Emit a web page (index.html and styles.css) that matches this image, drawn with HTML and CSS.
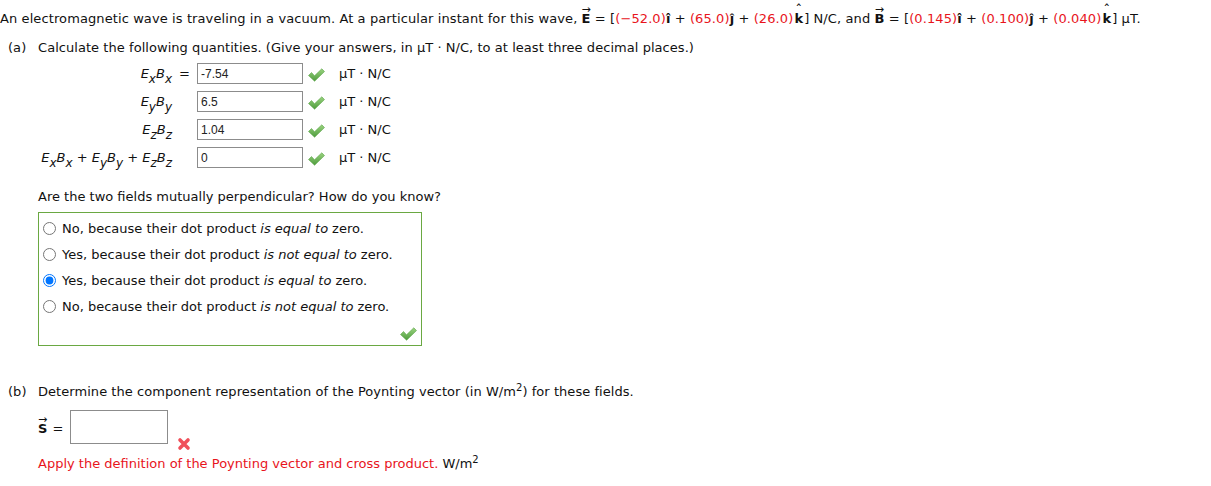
FILE: index.html
```html
<!DOCTYPE html>
<html lang="en">
<head>
    <meta charset="UTF-8">
    <meta name="viewport" content="width=device-width, initial-scale=1.0">
    <title>Poynting Vector</title>
    <link rel="stylesheet" href="styles.css">
</head>
<body>
    <p class="intro">
        An electromagnetic wave is traveling in a vacuum. At a particular instant for this wave,
        <span class="vec">E</span> = [<span class="val">(&minus;52.0)</span><b>&icirc;</b> + <span class="val">(65.0)</span><b>&jcirc;</b> + <span class="val">(26.0)</span><span class="hat">k</span>] N/C, and
        <span class="vec">B</span> = [<span class="val">(0.145)</span><b>&icirc;</b> + <span class="val">(0.100)</span><b>&jcirc;</b> + <span class="val">(0.040)</span><span class="hat">k</span>] &micro;T.
    </p>

    <div class="part">
        <div class="part-head">
            <span class="part-label">(a)</span>
            <span>Calculate the following quantities. (Give your answers, in &micro;T &middot; N/C, to at least three decimal places.)</span>
        </div>

        <div class="calc-grid">
            <div class="calc-label"><i>E<sub>x</sub>B<sub>x</sub></i></div>
            <div class="calc-eq">=</div>
            <input class="answer" type="text" value="-7.54">
            <svg class="check" viewBox="0 0 17 14"><use href="#tick"/></svg>
            <div class="unit">&micro;T &middot; N/C</div>

            <div class="calc-label"><i>E<sub>y</sub>B<sub>y</sub></i></div>
            <div class="calc-eq"></div>
            <input class="answer" type="text" value="6.5">
            <svg class="check" viewBox="0 0 17 14"><use href="#tick"/></svg>
            <div class="unit">&micro;T &middot; N/C</div>

            <div class="calc-label"><i>E<sub>z</sub>B<sub>z</sub></i></div>
            <div class="calc-eq"></div>
            <input class="answer" type="text" value="1.04">
            <svg class="check" viewBox="0 0 17 14"><use href="#tick"/></svg>
            <div class="unit">&micro;T &middot; N/C</div>

            <div class="calc-label"><i>E<sub>x</sub>B<sub>x</sub></i> + <i>E<sub>y</sub>B<sub>y</sub></i> + <i>E<sub>z</sub>B<sub>z</sub></i></div>
            <div class="calc-eq"></div>
            <input class="answer" type="text" value="0">
            <svg class="check" viewBox="0 0 17 14"><use href="#tick"/></svg>
            <div class="unit">&micro;T &middot; N/C</div>
        </div>

        <p class="question">Are the two fields mutually perpendicular? How do you know?</p>

        <div class="choice-box">
            <label class="choice"><input type="radio" name="perp"> No, because their dot product <i>is equal to</i> zero.</label>
            <label class="choice"><input type="radio" name="perp"> Yes, because their dot product <i>is not equal to</i> zero.</label>
            <label class="choice"><input type="radio" name="perp" checked> Yes, because their dot product <i>is equal to</i> zero.</label>
            <label class="choice"><input type="radio" name="perp"> No, because their dot product <i>is not equal to</i> zero.</label>
            <div class="box-check"><svg class="check" viewBox="0 0 17 14"><use href="#tick"/></svg></div>
        </div>
    </div>

    <div class="part part-b">
        <div class="part-head">
            <span class="part-label">(b)</span>
            <span>Determine the component representation of the Poynting vector (in W/m<sup>2</sup>) for these fields.</span>
        </div>
        <div class="s-row">
            <span class="vec">S</span>
            <span class="s-eq">=</span>
            <input class="s-input" type="text">
            <svg class="cross" viewBox="0 0 14 14">
                <path d="M3 3 L11 11 M11 3 L3 11" stroke="#f0505a" stroke-width="3.6" stroke-linecap="round"/>
            </svg>
        </div>
        <p class="hint">Apply the definition of the Poynting vector and cross product. <span class="hint-unit">W/m<sup>2</sup></span></p>
    </div>

    <svg width="0" height="0" class="defs">
        <defs>
            <linearGradient id="tickfill" x1="0" y1="0" x2="0" y2="1">
                <stop offset="0" stop-color="#9ad37f"/>
                <stop offset="1" stop-color="#4e9c3d"/>
            </linearGradient>
            <symbol id="tick" viewBox="0 0 17 14">
                <path d="M0.5 7.5 L3.5 4.5 L6.5 7.8 L13.8 0.8 L16.5 3.6 L6.6 13.2 Z" fill="url(#tickfill)" stroke="#5aa548" stroke-width="0.6"/>
            </symbol>
        </defs>
    </svg>
</body>
</html>
```

FILE: styles.css
```css
* {
    box-sizing: border-box;
}

body {
    margin: 0;
    font-family: "DejaVu Sans", Verdana, sans-serif;
    font-size: 13px;
    color: #111;
    background: #fff;
}

p {
    margin: 0;
}

.intro {
    margin-top: 10px;
    line-height: 18px;
    white-space: nowrap;
    letter-spacing: 0.1px;
}

.val {
    color: #e8141c;
}

.vec,
.hat {
    position: relative;
    display: inline-block;
    font-weight: bold;
}

.vec::before {
    content: "\2192";
    position: absolute;
    left: 50%;
    top: -9px;
    transform: translateX(-50%);
    font-weight: normal;
    font-size: 11px;
}

.hat {
    padding: 0 1px;
}

.hat::before {
    content: "\02C6";
    position: absolute;
    left: 50%;
    top: -9px;
    transform: translateX(-50%);
    font-weight: normal;
    font-size: 14px;
}

.part-head {
    display: flex;
    padding-left: 8px;
    line-height: 18px;
    letter-spacing: 0.05px;
}

.part {
    margin-top: 11px;
}

.part-label {
    width: 30px;
}

.calc-grid {
    display: grid;
    grid-template-columns: 134px 25px 106px 36px auto;
    grid-auto-rows: 21px;
    row-gap: 7px;
    align-items: center;
    margin: 6px 0 0 38px;
}

.calc-label {
    text-align: right;
    white-space: nowrap;
    line-height: 21px;
}

.calc-label sub {
    font-size: 12px;
    line-height: 0;
    vertical-align: -5px;
}

.calc-eq {
    text-align: center;
}

.answer {
    width: 106px;
    height: 21px;
    border: 1px solid #8c8c8c;
    padding: 0 3px;
    font-family: "Liberation Sans", Arial, sans-serif;
    font-size: 12px;
    color: #222;
}

.check {
    width: 17px;
    height: 14px;
    margin: 3px 0 0 5px;
}

.question {
    margin: 21px 0 0 38px;
}

.choice-box {
    width: 384px;
    height: 134px;
    margin: 8px 0 0 38px;
    border: 1px solid #6aa842;
    padding-top: 2px;
    position: relative;
}

.choice {
    display: flex;
    align-items: center;
    height: 26px;
}

.choice input {
    width: 13px;
    height: 13px;
    margin: 0 6px 0 4px;
}

.choice i {
    margin: 0 4px;
}

.box-check {
    position: absolute;
    right: 4px;
    bottom: 4px;
}

.box-check .check {
    margin: 0;
    display: block;
}

.part-b {
    margin-top: 37px;
}

.part-b sup {
    font-size: 10px;
    line-height: 0;
}

.s-row {
    display: flex;
    align-items: flex-start;
    margin: 9px 0 0 38px;
    line-height: 18px;
}

.s-row .vec,
.s-eq {
    margin-top: 10px;
}

.s-eq {
    margin-left: 5px;
}

.s-input {
    width: 98px;
    height: 34px;
    margin-left: 7px;
    border: 1px solid #8c8c8c;
}

.cross {
    width: 14px;
    height: 14px;
    margin: 27px 0 0 9px;
}

.hint {
    margin: 5px 0 0 38px;
    color: #e8141c;
}

.hint-unit {
    color: #111;
}

.hint sup {
    font-size: 10px;
    line-height: 0;
}

.defs {
    position: absolute;
}
```
